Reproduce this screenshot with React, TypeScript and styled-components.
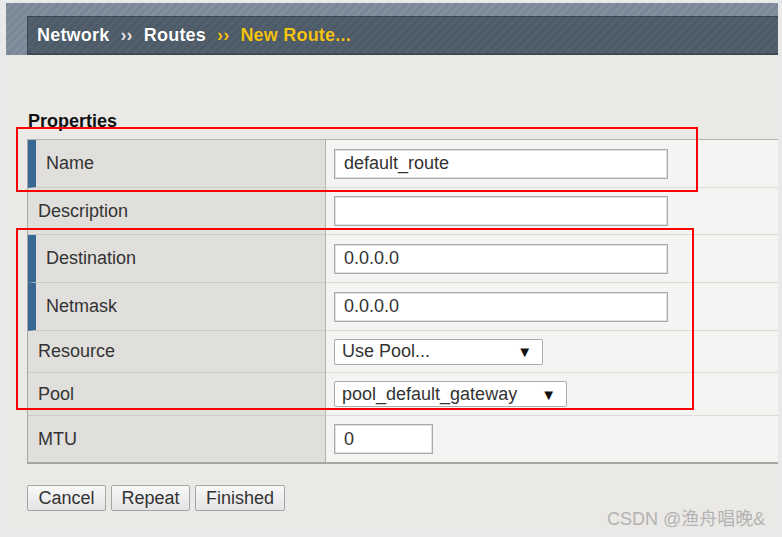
import React from "react";
import styled, { createGlobalStyle } from "styled-components";

const Global = createGlobalStyle`
  html, body { margin: 0; padding: 0; }
  body {
    background: #e9e9e9;
    font-family: "Liberation Sans", Arial, sans-serif;
    width: 782px;
    height: 537px;
    overflow: hidden;
  }
`;

const Frame = styled.div`
  position: relative;
  width: 782px;
  height: 537px;
  box-sizing: border-box;
  padding: 3px 4px 10px 6px;
  background: #e9e9e9;
`;

const Shell = styled.div`
  display: flex;
  flex-direction: column;
  height: 100%;
  background: #ebe9e6;
`;

const Header = styled.div`
  height: 52px;
  box-sizing: border-box;
  padding: 13px 0 0 21px;
  background: repeating-linear-gradient(
    135deg,
    #7a8796 0px,
    #7a8796 3px,
    #828f9d 3px,
    #828f9d 6px
  );
`;

const Crumbs = styled.div`
  height: 39px;
  box-sizing: border-box;
  display: flex;
  align-items: center;
  padding-left: 9px;
  border-top: 1px solid #3c4652;
  border-left: 1px solid #3c4652;
  border-bottom: 2px solid #3f4955;
  background: repeating-linear-gradient(
    135deg,
    #4d5a68 0px,
    #4d5a68 3px,
    #52606e 3px,
    #52606e 6px
  );
  font-family: "Liberation Sans", Arial, sans-serif;
  font-weight: bold;
  font-size: 18px;
  letter-spacing: 0.2px;
  color: #ffffff;
  text-shadow: 0 0 1px rgba(0, 0, 0, 0.4);
  white-space: nowrap;
`;

const Crumb = styled.span<{ $current?: boolean }>`
  color: ${(p) => (p.$current ? "#f5c516" : "#ffffff")};
`;

const Sep = styled.span<{ $current?: boolean }>`
  margin: 0 11px 0 11px;
  color: ${(p) => (p.$current ? "#f5c516" : "#e4e4e4")};
`;

const Content = styled.div`
  flex: 1;
  padding: 56px 0 0 21px;
`;

const Title = styled.div`
  font-weight: bold;
  font-size: 18px;
  line-height: 21px;
  color: #111;
  margin: 0 0 7px 1px;
`;

const Table = styled.div`
  border-top: 1px solid #b3b1ae;
  border-left: 1px solid #aaa8a5;
  border-bottom: 2px solid #a8a6a3;
  display: flex;
  flex-direction: column;
`;

const Row = styled.div<{ $h: number }>`
  display: flex;
  height: ${(p) => p.$h}px;
`;

const Label = styled.div<{ $req?: boolean; $last?: boolean }>`
  width: 298px;
  box-sizing: border-box;
  display: flex;
  align-items: center;
  padding-left: 10px;
  background: #e0dfdc;
  border-left: ${(p) => (p.$req ? "8px solid #386794" : "0")};
  border-right: 1px solid #b4b2af;
  border-bottom: ${(p) => (p.$last ? "0" : "1px solid #cdcbc8")};
  font-size: 18px;
  color: #333;
`;

const Value = styled.div<{ $last?: boolean }>`
  flex: 1;
  box-sizing: border-box;
  display: flex;
  align-items: center;
  padding-left: 8px;
  background: #f5f4f2;
  border-bottom: ${(p) => (p.$last ? "0" : "1px solid #dcdad7")};
`;

const TextInput = styled.div<{ $w: number }>`
  width: ${(p) => p.$w}px;
  height: 30px;
  box-sizing: border-box;
  display: flex;
  align-items: center;
  padding-left: 9px;
  background: #fff;
  border: 1px solid #a9a9a9;
  box-shadow: inset 0 0 0 1px #e2e2e2;
  font-size: 18px;
  color: #333;
`;

const SelectBox = styled.div<{ $w: number }>`
  width: ${(p) => p.$w}px;
  height: 26px;
  box-sizing: border-box;
  display: flex;
  align-items: center;
  justify-content: space-between;
  padding: 0 10px 0 7px;
  background: #fff;
  border: 1px solid #aaa;
  border-radius: 2px;
  font-size: 18px;
  color: #333;
`;

const Arrow = styled.span`
  font-size: 15px;
  color: #111;
`;

const Buttons = styled.div`
  display: flex;
  gap: 5px;
  margin-top: 21px;
`;

const Button = styled.div<{ $w: number }>`
  width: ${(p) => p.$w}px;
  height: 26px;
  box-sizing: border-box;
  display: flex;
  align-items: center;
  justify-content: center;
  border: 1px solid #a6a6a6;
  border-radius: 2px;
  background: linear-gradient(#f8f8f8, #e4e4e4);
  font-size: 18px;
  color: #333;
`;

const Highlight = styled.div<{ $x: number; $y: number; $w: number; $h: number }>`
  position: absolute;
  left: ${(p) => p.$x}px;
  top: ${(p) => p.$y}px;
  width: ${(p) => p.$w}px;
  height: ${(p) => p.$h}px;
  box-sizing: border-box;
  border: 2px solid #ff0000;
  pointer-events: none;
`;

const Watermark = styled.div`
  position: absolute;
  left: 607px;
  top: 504px;
  font-family: "Liberation Sans", "Noto Sans CJK SC", sans-serif;
  font-size: 18px;
  color: #b3b3b3;
  white-space: nowrap;
`;

type Field = {
  label: string;
  h: number;
  req?: boolean;
  kind: "input" | "select";
  value: string;
  w: number;
};

const fields: Field[] = [
  { label: "Name", h: 48, req: true, kind: "input", value: "default_route", w: 334 },
  { label: "Description", h: 47, kind: "input", value: "", w: 334 },
  { label: "Destination", h: 48, req: true, kind: "input", value: "0.0.0.0", w: 334 },
  { label: "Netmask", h: 48, req: true, kind: "input", value: "0.0.0.0", w: 334 },
  { label: "Resource", h: 42, kind: "select", value: "Use Pool...", w: 209 },
  { label: "Pool", h: 43, kind: "select", value: "pool_default_gateway", w: 233 },
  { label: "MTU", h: 46, kind: "input", value: "0", w: 99 },
];

export default function App() {
  return (
    <>
      <Global />
      <Frame>
        <Shell>
          <Header>
            <Crumbs>
              <Crumb>Network</Crumb>
              <Sep>››</Sep>
              <Crumb>Routes</Crumb>
              <Sep $current>››</Sep>
              <Crumb $current>New Route...</Crumb>
            </Crumbs>
          </Header>
          <Content>
            <Title>Properties</Title>
            <Table>
              {fields.map((f, i) => {
                const last = i === fields.length - 1;
                return (
                  <Row key={f.label} $h={f.h}>
                    <Label $req={f.req} $last={last}>{f.label}</Label>
                    <Value $last={last}>
                      {f.kind === "input" ? (
                        <TextInput $w={f.w}>{f.value}</TextInput>
                      ) : (
                        <SelectBox $w={f.w}>
                          <span>{f.value}</span>
                          <Arrow>▼</Arrow>
                        </SelectBox>
                      )}
                    </Value>
                  </Row>
                );
              })}
            </Table>
            <Buttons>
              <Button $w={79}>Cancel</Button>
              <Button $w={79}>Repeat</Button>
              <Button $w={90}>Finished</Button>
            </Buttons>
          </Content>
        </Shell>
        <Highlight $x={16} $y={127} $w={682} $h={65} />
        <Highlight $x={16} $y={228} $w={678} $h={182} />
        <Watermark>CSDN @渔舟唱晚&amp;</Watermark>
      </Frame>
    </>
  );
}
